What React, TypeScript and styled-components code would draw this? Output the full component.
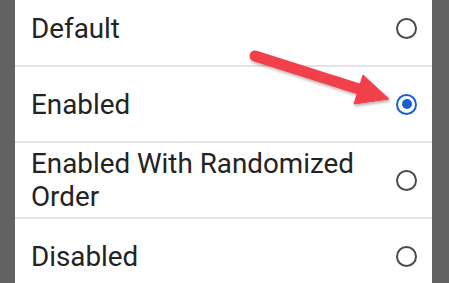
import React, { useState } from "react";
import styled, { createGlobalStyle } from "styled-components";

const GlobalStyle = createGlobalStyle`
  html, body {
    margin: 0;
    padding: 0;
    background: #626262;
    overflow: hidden;
  }
`;

const Page = styled.div`
  position: relative;
  width: 449px;
  height: 283px;
  display: flex;
  flex-direction: row;
  background: #626262;
  overflow: hidden;
`;

const Panel = styled.div`
  margin-left: 15px;
  width: 417px;
  height: 100%;
  background: #ffffff;
  overflow: hidden;
`;

const List = styled.div`
  display: flex;
  flex-direction: column;
  margin-top: -9px;
`;

const Row = styled.label`
  display: flex;
  flex-direction: row;
  align-items: center;
  justify-content: space-between;
  gap: 20px;
  min-height: 76px;
  padding: 3px 15px 3px 16px;
  box-sizing: border-box;
  border-bottom: 2px solid #e4e4e4;
  cursor: pointer;
`;

const Label = styled.span`
  font-family: Roboto, "Liberation Sans", sans-serif;
  font-size: 27.8px;
  line-height: 33px;
  color: #232323;
`;

const Radio = styled.span<{ $checked: boolean }>`
  flex: none;
  width: 21px;
  height: 21px;
  box-sizing: border-box;
  border-radius: 50%;
  border: 2.5px solid ${(p) => (p.$checked ? "#1a5fd2" : "#4a4a4a")};
  display: flex;
  align-items: center;
  justify-content: center;

  &::after {
    content: "";
    width: 10px;
    height: 10px;
    border-radius: 50%;
    background: #1a5fd2;
    display: ${(p) => (p.$checked ? "block" : "none")};
  }
`;

const Arrow = styled.svg`
  position: absolute;
  left: 0;
  top: 0;
  pointer-events: none;
`;

const options = ["Default", "Enabled", "Enabled With Randomized Order", "Disabled"];

export default function App() {
  const [selected, setSelected] = useState(1);
  return (
    <>
      <GlobalStyle />
      <Page>
        <Panel>
          <List>
            {options.map((o, i) => (
              <Row key={o} onClick={() => setSelected(i)}>
                <Label>{o}</Label>
                <Radio $checked={selected === i} />
              </Row>
            ))}
          </List>
        </Panel>
        <Arrow width="449" height="283" viewBox="0 0 449 283">
          <defs>
            <filter id="sh" x="-20%" y="-20%" width="140%" height="160%">
              <feDropShadow dx="1" dy="2" stdDeviation="1.5" floodColor="#000" floodOpacity="0.3" />
            </filter>
          </defs>
          <g filter="url(#sh)" fill="#f1404a" stroke="#f1404a">
            <line x1="255" y1="56" x2="362" y2="90" strokeWidth="11" strokeLinecap="round" />
            <polygon points="389,99 363,75 354,104" strokeWidth="1" strokeLinejoin="round" />
          </g>
        </Arrow>
      </Page>
    </>
  );
}
